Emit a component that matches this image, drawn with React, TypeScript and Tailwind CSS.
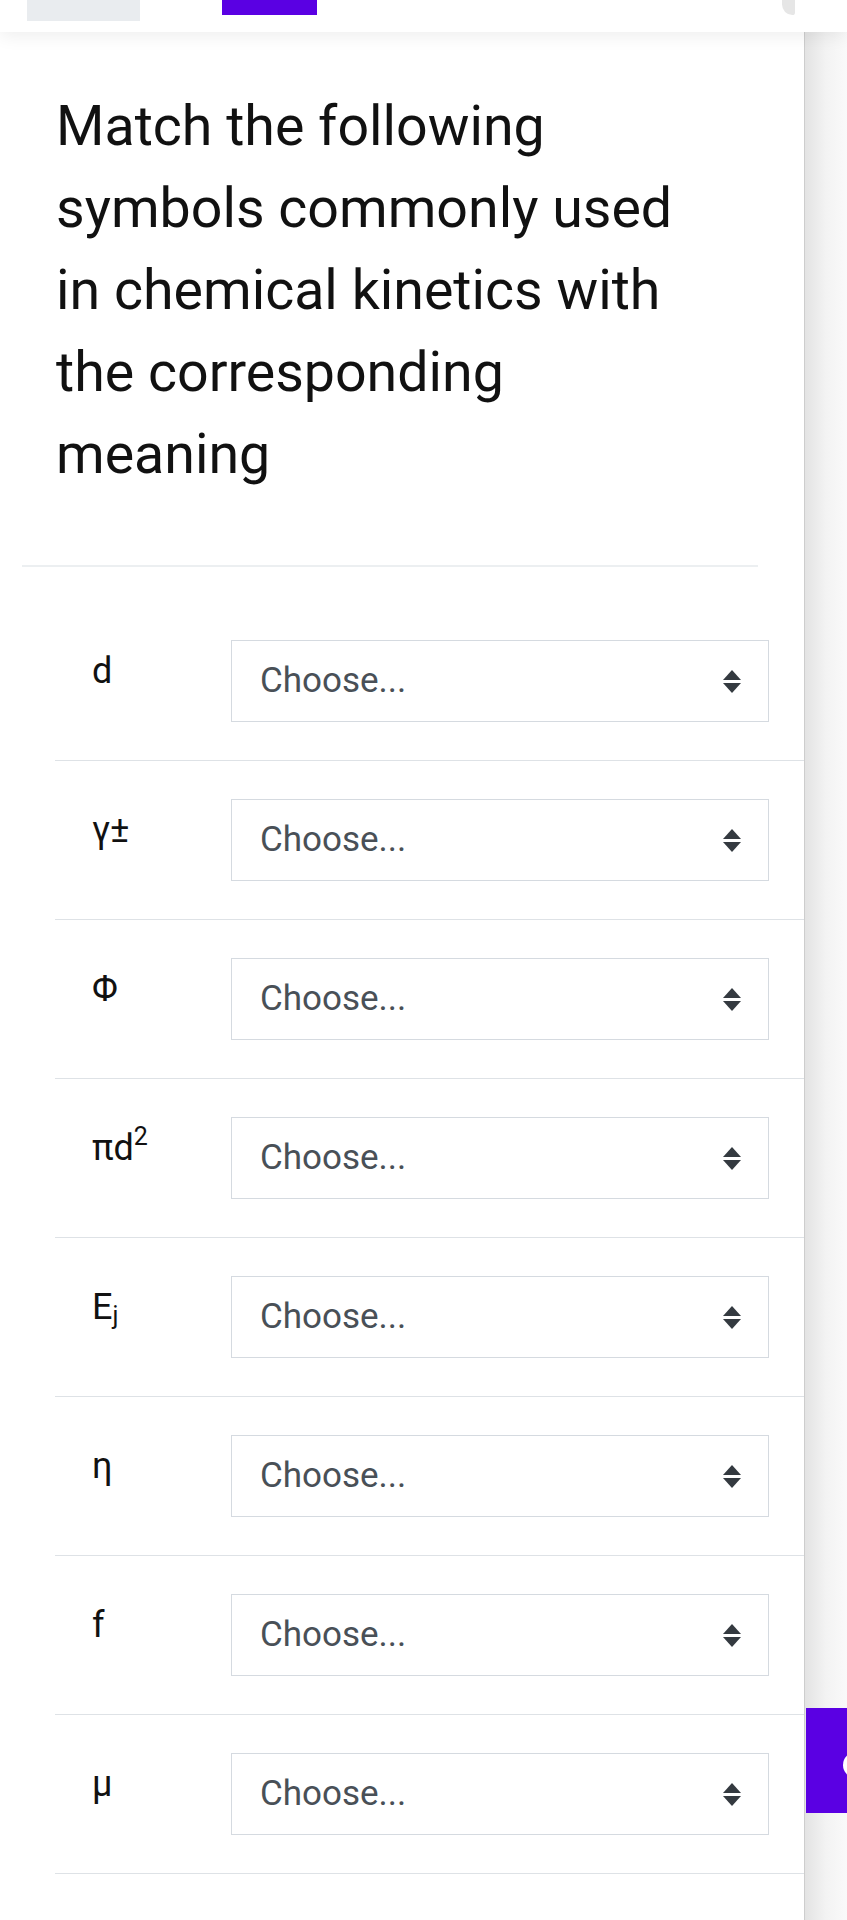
import { ReactNode } from "react";

interface Pair {
  id: number;
  label: ReactNode;
}

const pairs: Pair[] = [
  { id: 1, label: "d" },
  { id: 2, label: "γ±" },
  { id: 3, label: "Φ" },
  {
    id: 4,
    label: (
      <>
        πd<sup className="text-[25px] relative -top-[15px]">2</sup>
      </>
    ),
  },
  {
    id: 5,
    label: (
      <>
        E<sub className="text-[25px] relative top-[5px]">j</sub>
      </>
    ),
  },
  { id: 6, label: "η" },
  { id: 7, label: "f" },
  { id: 8, label: "μ" },
];

const SortArrows = () => (
  <svg width="18" height="23" viewBox="0 0 18 23" fill="#343a40">
    <polygon points="9,0 18,10 0,10" />
    <polygon points="0,13 18,13 9,23" />
  </svg>
);

const App = () => {
  return (
    <div className="min-h-[1920px] bg-white font-['Roboto','Liberation_Sans',sans-serif] overflow-hidden">
      {/* top bar */}
      <header className="relative z-10 h-[32px] bg-white flex items-start shadow-[0_4px_18px_rgba(0,0,0,0.07)]">
        <div className="ml-[27px] w-[113px] h-[21px] bg-[#e9ecef]" />
        <div className="ml-[82px] w-[95px] h-[15px] bg-[#5a00e3]" />
        <div className="ml-auto mr-[52px] w-[13px] h-[15px] bg-[#e6e6e6] rounded-bl-[12px] rounded-br-[3px]" />
      </header>

      <div className="flex">
        <main className="w-[804px] shrink-0">
          <section className="ml-[22px] mr-[46px] px-[34px] pt-[54px] pb-[69px] border-b-2 border-[#eceff1]">
            <h1 className="text-[55.5px] leading-[82px] text-[#111] font-normal">
              Match the following symbols commonly used in chemical kinetics with the corresponding meaning
            </h1>
          </section>

          <div className="ml-[55px] mt-[35px]">
            {pairs.map((p) => (
              <div
                key={p.id}
                className="flex items-start pl-[37px] py-[38px] border-b border-[#dee2e6]"
              >
                <div className="w-[139px] text-[36px] leading-[62px] text-[#111]">{p.label}</div>
                <div className="w-[538px] h-[82px] border-[1.5px] border-[#d5dae0] flex items-center justify-between pl-[28px] pr-[27px]">
                  <span className="text-[35px] text-[#495057]">Choose...</span>
                  <SortArrows />
                </div>
              </div>
            ))}
          </div>
        </main>

        <aside className="relative flex-1 min-h-[1888px] border-l border-[#cdcdcd] bg-gradient-to-r from-[#e3e3e3] via-[#f3f3f3] to-[#fafafa]">
          <button className="absolute top-[1676px] left-[1px] w-[42px] h-[105px] bg-[#5a00e3] overflow-hidden">
            <span className="absolute left-[37px] top-[44px] w-[26px] h-[26px] rounded-full bg-white" />
          </button>
        </aside>
      </div>
    </div>
  );
};

export default App;
